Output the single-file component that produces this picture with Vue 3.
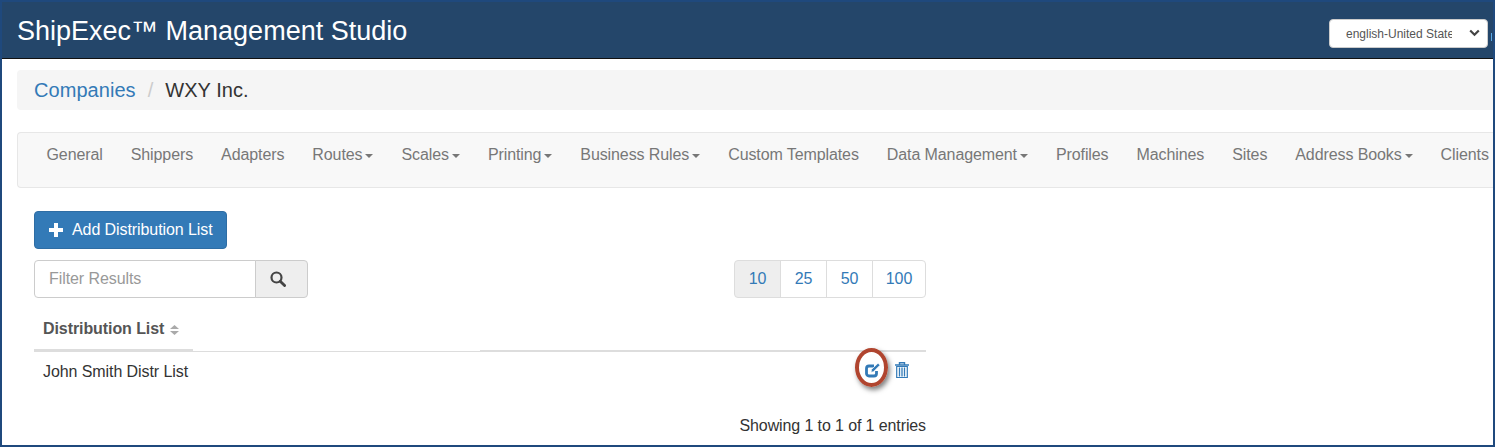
<template>
  <div class="frame">
    <header class="top">
      <div class="brand">ShipExec™ Management Studio</div>
      <div class="top-right">
        <div class="lang-wrap">
          <select class="lang"><option>english-United States</option></select>
          <svg class="chev" width="11" height="8" viewBox="0 0 11 8"><path d="M1.200 1.500L5.500 5.800 9.800 1.500" fill="none" stroke="#444" stroke-width="2.200"/></svg>
        </div>
        <span class="sliver"></span>
      </div>
    </header>
    <nav class="crumb">
      <a class="link">Companies</a>
      <span class="sep">/</span>
      <span class="cur">WXY Inc.</span>
    </nav>
    <ul class="menu">
      <li v-for="m in menu" :key="m.t">{{ m.t }}<i v-if="m.c" class="caret"></i></li>
    </ul>
    <main class="content">
      <button class="add">
        <svg class="plus" width="14" height="14" viewBox="0 0 14 14"><path d="M5 0h4v5h5v4H9v5H5V9H0V5h5z" fill="#fff"/></svg>
        Add Distribution List
      </button>
      <div class="tools">
        <div class="search">
          <div class="input">Filter Results</div>
          <div class="sbtn">
            <svg width="16" height="16" viewBox="0 0 16 16"><circle cx="6.500" cy="6.500" r="5" fill="none" stroke="#444" stroke-width="2.200"/><path d="M10.200 10.200l4.400 4.400" stroke="#444" stroke-width="2.800" stroke-linecap="round"/></svg>
          </div>
        </div>
        <div class="pages">
          <span v-for="(p, i) in pages" :key="p" class="page" :class="{ on: i === 0 }">{{ p }}</span>
        </div>
      </div>
      <div class="thead">
        <div class="th">Distribution List
          <svg class="sort" width="9" height="10" viewBox="0 0 9 10"><path d="M4.500 0L9 4H0zM4.500 10L0 6h9z" fill="#aaa"/></svg>
        </div>
        <div class="mid"></div>
        <div class="end"></div>
      </div>
      <div class="row">
        <span>John Smith Distr List</span>
        <span class="acts">
          <span class="edit">
            <svg width="17" height="16" viewBox="0 0 17 16"><path d="M11.500 9v2.500a2.500 2.500 0 0 1-2.500 2.500H4a2.500 2.500 0 0 1-2.500-2.500V6.500A2.500 2.500 0 0 1 4 4h5" fill="none" stroke="#337ab7" stroke-width="2.800"/><path d="M6.500 7.500L13 1.200l2 2-6.500 6.500L6 10.200z" fill="#337ab7" stroke="#fff" stroke-width=".7"/></svg>
            <i class="ring"></i>
          </span>
          <svg width="14" height="16" viewBox="0 0 14 16"><path d="M0 3h14M4.500 2.500V.7h5v1.800" fill="none" stroke="#337ab7" stroke-width="1.400"/><path d="M1.700 4.500h10.600V15.500H1.700z" fill="none" stroke="#337ab7" stroke-width="1.200"/><path d="M4.500 5.500v9M7 5.500v9M9.500 5.500v9" stroke="#337ab7" stroke-width="1.300"/></svg>
        </span>
      </div>
      <div class="info">Showing 1 to 1 of 1 entries</div>
    </main>
  </div>
</template>

<script setup>
const menu = [
  { t: 'General' }, { t: 'Shippers' }, { t: 'Adapters' }, { t: 'Routes', c: 1 },
  { t: 'Scales', c: 1 }, { t: 'Printing', c: 1 }, { t: 'Business Rules', c: 1 },
  { t: 'Custom Templates' }, { t: 'Data Management', c: 1 }, { t: 'Profiles' },
  { t: 'Machines' }, { t: 'Sites' }, { t: 'Address Books', c: 1 }, { t: 'Clients' }
]
const pages = [10, 25, 50, 100]
</script>

<style>
html, body { margin: 0; background: #fff; overflow: hidden; }
</style>

<style scoped>
.frame {
  width: 1495px; height: 447px; box-sizing: border-box;
  border: 2px solid #1f497d; overflow: hidden; background: #fff;
  font-family: "Liberation Sans", Arial, sans-serif; font-size: 16px; color: #333;
  letter-spacing: -.08px;
}
.top {
  height: 57px; box-sizing: border-box; background: #24466a; border-bottom: 1px solid #111;
  display: flex; justify-content: space-between; align-items: center; padding-left: 15px;
}
.brand { color: #fff; font-size: 27px; letter-spacing: 0; padding-top: 2px; }
.top-right { display: flex; align-items: center; gap: 3px; margin-top: 7px; margin-right: 1px; }
.lang-wrap { position: relative; width: 159px; height: 29px; }
.lang {
  appearance: none; display: block; width: 100%; height: 100%; box-sizing: border-box; background: #fff; border: 1px solid #ccc;
  border-radius: 4px; font: 12px "Liberation Sans", Arial, sans-serif; color: #555; padding: 0 35px 0 16px;
}
.chev { position: absolute; right: 8px; top: 10px; pointer-events: none; }
.sliver { width: 1px; height: 8px; background: #5aa9e6; margin-top: 6px; }
.crumb {
  margin: 11px 0 0 15px; height: 40px; box-sizing: border-box; background: #f5f5f5;
  border-radius: 4px 0 0 4px; display: flex; align-items: center; padding-left: 17px; font-size: 20px;
  letter-spacing: .05px;
}
.link { color: #337ab7; }
.sep { color: #ccc; margin: 0 12px; }
.cur { color: #333; }
.menu {
  list-style: none; margin: 22px 0 0 15px; padding: 0 0 0 28.5px; height: 56px; box-sizing: border-box;
  background: #f8f8f8; border: 1px solid #e7e7e7; border-right: 0; border-radius: 4px 0 0 4px;
  display: flex; gap: 28px; white-space: nowrap; overflow: hidden; color: #777; line-height: 44px;
  letter-spacing: -.1px;
}
.menu li { flex: none; }
.caret {
  display: inline-block; margin-left: 3px; vertical-align: middle; width: 0; height: 0;
  border-top: 4px solid #777; border-left: 4px solid transparent; border-right: 4px solid transparent;
}
.content { padding: 23px 0 0 32px; width: 892px; }
.add {
  display: flex; align-items: center; gap: 9px; height: 38px; width: 193px; box-sizing: border-box;
  background: #337ab7; color: #fff; border: 1px solid #2e6da4; border-radius: 4px;
  font: 16px "Liberation Sans", Arial, sans-serif; letter-spacing: -.08px; padding: 0 0 0 14px;
}
.tools { display: flex; justify-content: space-between; margin-top: 11px; }
.search { display: flex; width: 274px; height: 38px; }
.input {
  flex: 1; box-sizing: border-box; border: 1px solid #ccc; border-radius: 4px 0 0 4px;
  color: #999; padding: 0 14px; line-height: 36px;
}
.sbtn {
  width: 53px; box-sizing: border-box; border: 1px solid #ccc; border-radius: 0 4px 4px 0;
  margin-left: -1px; background: #eee; display: flex; align-items: center; padding-left: 14px;
}
.pages { display: flex; height: 38px; }
.page {
  box-sizing: border-box; width: 47px; text-align: center; border: 1px solid #ddd; margin-left: -1px; line-height: 36px;
  color: #337ab7; background: #fff;
}
.page:first-child { margin-left: 0; border-radius: 4px 0 0 4px; }
.page:last-child { width: 54px; border-radius: 0 4px 4px 0; }
.page.on { background: #eee; }
.thead { margin-top: 12px; height: 42px; display: flex; align-items: flex-end; }
.th {
  width: 159px; height: 42px; box-sizing: border-box; border-bottom: 3px solid #ddd;
  padding: 9px 9px 0; font-weight: 700; line-height: 20px; color: #555; white-space: nowrap;
}
.mid { width: 287px; height: 1px; background: #ddd; }
.end { flex: 1; height: 2px; background: #ddd; }
.sort { margin-left: 1px; vertical-align: -1px; }
.row { display: flex; justify-content: space-between; align-items: center; padding: 0 17px 0 9px; height: 39px; }
.acts { display: flex; align-items: center; gap: 13px; padding-bottom: 3px; }
.edit { position: relative; display: flex; }
.ring {
  position: absolute; left: -10px; top: -14px; width: 33px; height: 39px; box-sizing: border-box;
  border: 4px solid #b0452f; border-radius: 50%; box-shadow: 2px 3px 5px rgba(0,0,0,.5);
}
.info { text-align: right; margin-top: 24px; line-height: 22px; letter-spacing: -.11px; }
</style>
